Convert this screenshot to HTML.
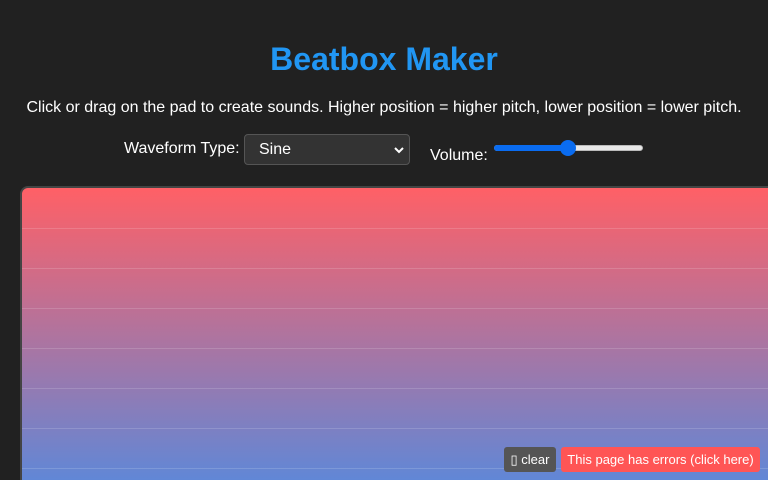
<!DOCTYPE html>
<html style="overflow:hidden;height:480px"><head><style>
body{margin:0;background:#212121;color:#fff;font-family:"Liberation Sans",sans-serif;width:768px;height:480px;overflow:hidden;position:relative}
h1{position:absolute;top:40px;left:0;width:768px;margin:0;text-align:center;color:#2196f3;font-size:32px;font-weight:bold;line-height:38px}
.p{position:absolute;top:98px;left:0;width:768px;text-align:center;font-size:16px;margin:0;line-height:20px}
.lbl{position:absolute;font-size:16px}
.sel{position:absolute;left:244px;top:134px;width:166px;height:31px;border:1px solid #555;border-radius:4px;background:#333;box-sizing:border-box}
.sel span{position:absolute;left:14px;top:6px;font-size:16px}
.track{position:absolute;left:494px;top:145px;width:149px;height:6px;border-radius:3px;background:#e8e8e8;border:1px solid #bbb;box-sizing:border-box}
.fill{position:absolute;left:494px;top:145px;width:74px;height:6px;border-radius:3px;background:#0a6cf0}
.thumb{position:absolute;left:560px;top:140px;width:16px;height:16px;border-radius:50%;background:#0a6cf0}
.pad{position:absolute;left:20px;top:186px;width:760px;height:292px;border:2px solid #444;border-bottom:0;border-right:0;border-radius:8px 0 0 0;background:linear-gradient(#ff6066 0px,#6187d6 292px);overflow:hidden}
.ln{position:absolute;left:0;width:100%;height:1px;background:rgba(255,255,255,.15)}
.btn{position:absolute;top:447px;height:25px;border-radius:3px;font-size:13px;line-height:25px;color:#fff}
</style></head><body>
<h1>Beatbox Maker</h1>
<p class="p">Click or drag on the pad to create sounds. Higher position = higher pitch, lower position = lower pitch.</p>
<div class="lbl" style="left:124px;top:140px">Waveform Type:</div>
<div class="sel"><span>Sine</span><svg style="position:absolute;right:5px;top:11px" width="10" height="8" viewBox="0 0 10 8"><path d="M1 2l4 4 4-4" stroke="#fff" stroke-width="2" fill="none"/></svg></div>
<div class="lbl" style="left:430px;top:147px">Volume:</div>
<div class="track"></div><div class="fill"></div><div class="thumb"></div>
<div class="pad">
<div class="ln" style="top:40px"></div><div class="ln" style="top:80px"></div><div class="ln" style="top:120px"></div><div class="ln" style="top:160px"></div><div class="ln" style="top:200px"></div><div class="ln" style="top:240px"></div><div class="ln" style="top:280px"></div>
</div>
<div class="btn" style="left:504px;width:52px;background:#555;text-align:center">&#9647; clear</div>
<div class="btn" style="left:561px;width:199px;background:#f55;text-align:center">This page has errors (click here)</div>
</body></html>
